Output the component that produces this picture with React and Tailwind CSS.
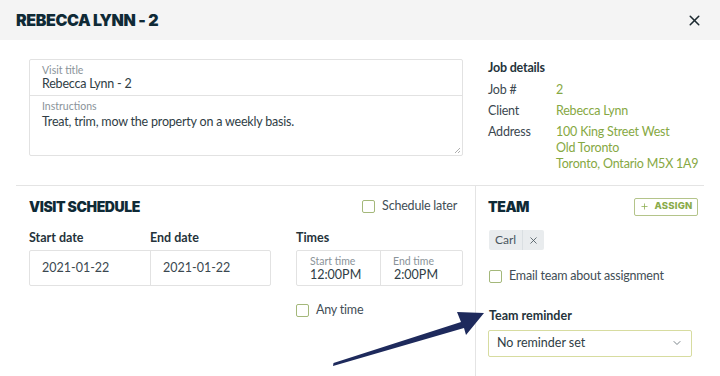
import { X, ChevronDown, Plus } from 'lucide-react';

const head = { fontFamily: 'Inter, "DejaVu Sans", sans-serif' };

function Check({ label }) {
  return (
    <label className="flex items-center gap-[7px] text-[12.5px] tracking-[-0.2px] text-[#424e56]">
      <span className="w-[13px] h-[13px] border-[1.5px] border-[#a4b87a] rounded-[2px] bg-white" />
      {label}
    </label>
  );
}

export default function App() {
  return (
    <div
      className="relative w-[720px] h-[376px] overflow-hidden bg-white text-[#2f3d45]"
      style={{ fontFamily: 'Lato, "Noto Sans", sans-serif' }}
    >
      <div className="h-[40px] bg-[#f4f4f4] flex items-center justify-between pl-[16px] pr-[17px]">
        <h1 style={head} className="text-[16px] font-black tracking-[-0.4px] text-[#0f2a36]">
          REBECCA LYNN - 2
        </h1>
        <X size={17} strokeWidth={2.2} className="text-[#1d2a31]" />
      </div>

      <div className="flex pl-[13px] pt-[19px] h-[146px] border-b border-[#e4e4e4] mx-[16px]">
        <div className="shrink-0 w-[434px] h-[97px] border border-[#e2e2e2] rounded-[2px] flex flex-col">
          <div className="h-[36px] border-b border-[#e2e2e2] px-[12px] pt-[3px] leading-[14px]">
            <div className="text-[10.5px] text-[#8a9399]">Visit title</div>
            <div className="text-[12.5px] tracking-[-0.2px] text-[#2f3d45]">Rebecca Lynn - 2</div>
          </div>
          <div className="relative flex-1 px-[12px] pt-[3px] leading-[15px]">
            <div className="text-[10.5px] text-[#8a9399]">Instructions</div>
            <div className="text-[12.5px] tracking-[-0.2px] text-[#2f3d45]">Treat, trim, mow the property on a weekly basis.</div>
            <svg className="absolute right-[1px] bottom-[1px]" width="7" height="7" viewBox="0 0 7 7">
              <path d="M6 1 L1 6 M6 4 L4 6" stroke="#999" strokeWidth="0.8" />
            </svg>
          </div>
        </div>
        <div className="ml-[25px] pt-[1px] text-[12.5px] tracking-[-0.2px] leading-[16px] whitespace-nowrap">
          <div className="font-bold text-[#25333b]">Job details</div>
          <div className="grid grid-cols-[68px_1fr] gap-y-[5px] mt-[6px] text-[#3b4850]">
            <div>Job #</div>
            <div className="text-[#86a843]">2</div>
            <div>Client</div>
            <div className="text-[#86a843]">Rebecca Lynn</div>
            <div>Address</div>
            <div className="text-[#86a843]">
              100 King Street West
              <br />
              Old Toronto
              <br />
              Toronto, Ontario M5X 1A9
            </div>
          </div>
        </div>
      </div>

      <div className="flex mx-[16px]">
        <div className="w-[459px] pl-[13px] pr-[12px] pt-[10px]">
          <div className="flex items-center justify-between">
            <h2 style={head} className="text-[14px] font-black tracking-[-0.4px] text-[#0f2a36]">
              VISIT SCHEDULE
            </h2>
            <div className="pr-[6px]">
              <Check label="Schedule later" />
            </div>
          </div>
          <div className="flex mt-[13px]">
            <div>
              <div className="flex text-[12.5px] font-bold text-[#25333b] leading-[16px]">
                <div className="w-[121px]">Start date</div>
                <div>End date</div>
              </div>
              <div className="mt-[4px] flex w-[242px] h-[36px] border border-[#e2e2e2] rounded-[2px] text-[12.5px] text-[#3b4850]">
                <div className="w-[121px] border-r border-[#e2e2e2] flex items-center pl-[12px]">2021-01-22</div>
                <div className="flex items-center pl-[12px]">2021-01-22</div>
              </div>
            </div>
            <div className="ml-[25px]">
              <div className="text-[12.5px] font-bold text-[#25333b] leading-[16px]">Times</div>
              <div className="mt-[4px] flex w-[167px] h-[36px] border border-[#e2e2e2] rounded-[2px] leading-[14px]">
                <div className="w-[84px] border-r border-[#e2e2e2] pl-[13px] pt-[3px]">
                  <div className="text-[10.5px] text-[#8a9399]">Start time</div>
                  <div className="text-[12.5px] text-[#2f3d45]">12:00PM</div>
                </div>
                <div className="pl-[12px] pt-[3px]">
                  <div className="text-[10.5px] text-[#8a9399]">End time</div>
                  <div className="text-[12.5px] text-[#2f3d45] pl-[1px]">2:00PM</div>
                </div>
              </div>
              <div className="mt-[15px]">
                <Check label="Any time" />
              </div>
            </div>
          </div>
        </div>

        <div className="flex-1 border-l border-[#e4e4e4] h-[190px] pl-[12px] pr-[6px] pt-[10px]">
          <div className="flex items-center justify-between">
            <h2 style={head} className="text-[14px] font-black tracking-[-0.4px] text-[#0f2a36]">
              TEAM
            </h2>
            <button className="flex items-center gap-[6px] h-[18px] w-[64px] justify-center border border-[#b4c48a] rounded-[2px] text-[9.5px] font-extrabold tracking-[0.2px] text-[#8aab4b]" style={head}>
              <Plus size={9} strokeWidth={2} />
              ASSIGN
            </button>
          </div>
          <div className="mt-[13px] inline-flex items-center h-[20px] bg-[#e9ecee] rounded-[2px] ml-[1px] text-[12px] text-[#4a565e]">
            <span className="px-[6px]">Carl</span>
            <span className="h-full flex items-center px-[5px] border-l border-[#dadfe2]">
              <X size={11} strokeWidth={1.8} />
            </span>
          </div>
          <div className="mt-[17px] ml-[1px]">
            <Check label="Email team about assignment" />
          </div>
          <div className="mt-[22px] ml-[1px] text-[12.5px] font-bold text-[#25333b] leading-[16px]">Team reminder</div>
          <div className="mt-[6px] w-[204px] h-[27px] border border-[#d7dca0] rounded-[2px] flex items-center justify-between px-[8px] text-[12.5px] text-[#2f3d45]">
            No reminder set
            <ChevronDown size={12} className="text-[#7a848a]" />
          </div>
        </div>
      </div>

      <svg className="absolute left-0 top-0 pointer-events-none" width="720" height="376" viewBox="0 0 720 376">
        <path d="M333 366 L333.5 363 L461 322 L457 312 L484 313 L466 335 L464 328 Z" fill="#1e2a5c" />
      </svg>
    </div>
  );
}
